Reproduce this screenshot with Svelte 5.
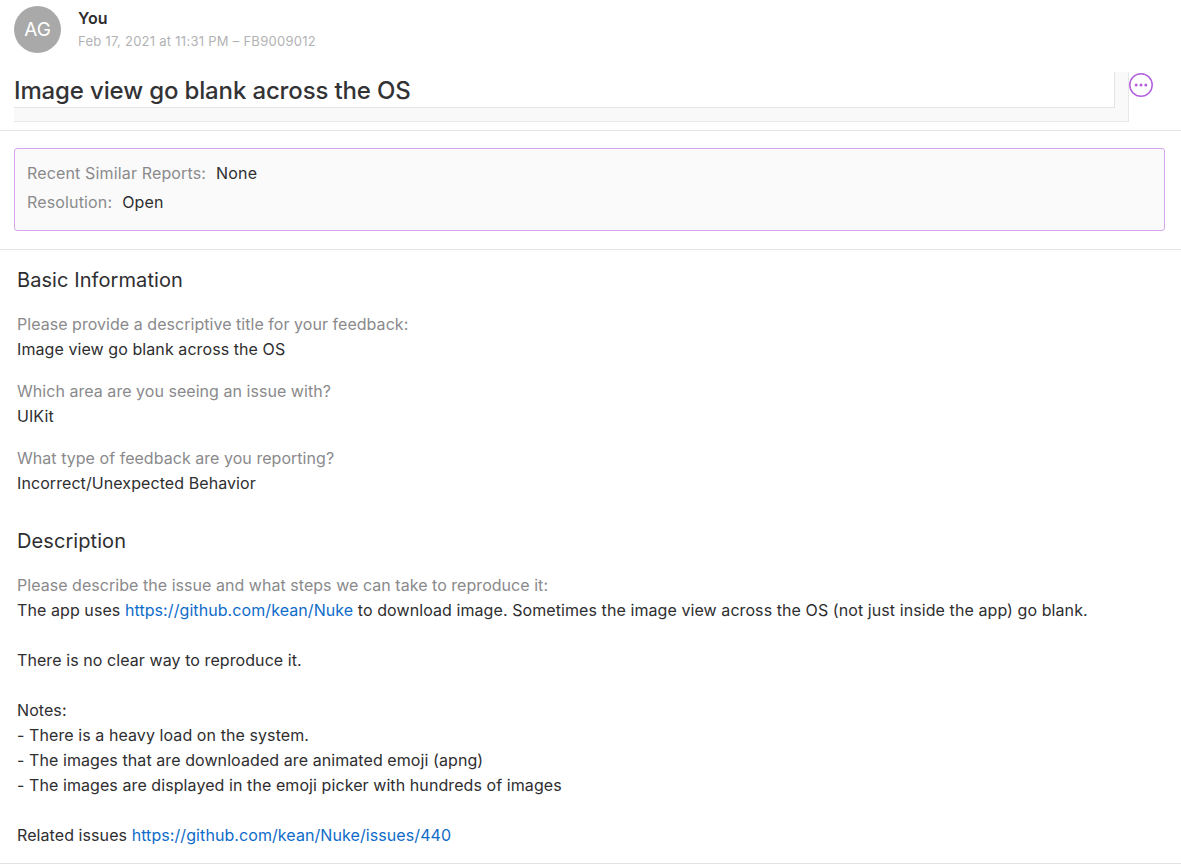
<script lang="ts">
  const basics = [
    { label: "Please provide a descriptive title for your feedback:", value: "Image view go blank across the OS" },
    { label: "Which area are you seeing an issue with?", value: "UIKit" },
    { label: "What type of feedback are you reporting?", value: "Incorrect/Unexpected Behavior" },
  ];
</script>

<main>
  <header class="sender">
    <div class="avatar">AG</div>
    <div class="who">
      <div class="name">You</div>
      <div class="meta">Feb 17, 2021 at 11:31 PM – FB9009012</div>
    </div>
  </header>

  <div class="title-row">
    <div class="title-box">
      <div class="title-inner">
        <h1>Image view go blank across the OS</h1>
      </div>
    </div>
    <svg class="more" width="26" height="26" viewBox="0 0 26 26" aria-label="More">
      <circle cx="13" cy="13" r="11.2" fill="none" stroke="#b25fdc" stroke-width="1.5" />
      <circle cx="8.2" cy="13" r="1.5" fill="#b25fdc" />
      <circle cx="13" cy="13" r="1.5" fill="#b25fdc" />
      <circle cx="17.8" cy="13" r="1.5" fill="#b25fdc" />
    </svg>
  </div>

  <section class="status-wrap">
    <div class="status">
      <div class="status-row"><span class="key">Recent Similar Reports:</span><span>None</span></div>
      <div class="status-row"><span class="key">Resolution:</span><span>Open</span></div>
    </div>
  </section>

  <section class="body">
    <h2>Basic Information</h2>
    {#each basics as item}
      <div class="field">
        <div class="label">{item.label}</div>
        <div>{item.value}</div>
      </div>
    {/each}

    <h2 class="second">Description</h2>
    <div class="field">
      <div class="label">Please describe the issue and what steps we can take to reproduce it:</div>
      <p>The app uses <a href="#nuke">https://github.com/kean/Nuke</a> to download image. Sometimes the image view across the OS (not just inside the app) go blank.</p>
      <p class="gap">There is no clear way to reproduce it.</p>
      <p class="gap">Notes:</p>
      <p>- There is a heavy load on the system.</p>
      <p>- The images that are downloaded are animated emoji (apng)</p>
      <p>- The images are displayed in the emoji picker with hundreds of images</p>
      <p class="gap">Related issues <a href="#issue">https://github.com/kean/Nuke/issues/440</a></p>
    </div>
  </section>
</main>

<style>
  :global(body) {
    margin: 0;
    background: #fff;
  }

  main {
    height: 864px;
    box-sizing: border-box;
    overflow: hidden;
    border-bottom: 1px solid #e2e2e2;
    font-family: Inter, "Liberation Sans", sans-serif;
    font-size: 16px;
    letter-spacing: 0.08px;
    color: #2e2e30;
  }

  .sender {
    display: flex;
    gap: 17px;
    padding: 6px 14px 0;
    height: 66px;
    box-sizing: border-box;
  }

  .avatar {
    width: 47px;
    height: 47px;
    border-radius: 50%;
    background: #a9a9a9;
    color: #fff;
    font-size: 19px;
    letter-spacing: 0;
    display: flex;
    align-items: center;
    justify-content: center;
  }

  .who {
    padding-top: 2px;
  }

  .name {
    font-weight: 600;
    line-height: 20px;
    letter-spacing: 0.1px;
  }

  .meta {
    margin-top: 4px;
    font-size: 13px;
    line-height: 18px;
    letter-spacing: 0.27px;
    color: #b2b2b4;
  }

  .title-row {
    display: flex;
    align-items: flex-start;
    height: 58px;
    margin-top: 6px;
    padding-left: 14px;
    border-bottom: 1px solid #e5e5e5;
  }

  .title-box {
    width: 1114px;
    height: 49px;
    background: #f9f9f9;
    border-right: 1px solid #e8e8e8;
    border-bottom: 1px solid #e8e8e8;
  }

  .title-inner {
    width: 1100px;
    height: 35px;
    background: #fff;
    border-right: 1px solid #e4e4e4;
    border-bottom: 1px solid #e4e4e4;
  }

  h1 {
    margin: 0;
    font-size: 24px;
    font-weight: 550;
    line-height: 37px;
    letter-spacing: -0.14px;
    color: #333336;
  }

  .more {
    margin: 0 0 0 -1px;
  }

  .status-wrap {
    padding: 17px 16px 18px 14px;
    border-bottom: 1px solid #e5e5e5;
  }

  .status {
    height: 83px;
    box-sizing: border-box;
    padding: 10px 12px;
    background: #fafafa;
    border: 1px solid #d5a6ee;
    border-radius: 3px;
    letter-spacing: 0.15px;
  }

  .status-row {
    display: flex;
    gap: 10px;
    line-height: 29px;
  }

  .key {
    color: #8a8a8c;
  }

  .body {
    padding: 17px 17px 0;
  }

  h2 {
    margin: 0 0 19px;
    font-size: 20px;
    font-weight: 400;
    line-height: 26px;
    letter-spacing: 0.08px;
  }

  h2.second {
    margin-top: 32px;
  }

  .field {
    line-height: 25px;
    margin-bottom: 17px;
  }

  .label {
    color: #8a8a8c;
    letter-spacing: 0.04px;
  }

  p {
    margin: 0;
  }

  p.gap {
    margin-top: 25px;
  }

  a {
    color: #0f6cc9;
    text-decoration: none;
  }
</style>
